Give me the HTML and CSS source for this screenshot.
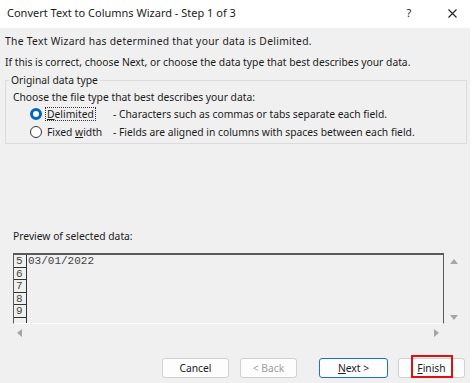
FILE: index.html
```html
<!DOCTYPE html>
<html>
<head>
<meta charset="utf-8">
<link rel="stylesheet" href="styles.css">
</head>
<body>
<div class="window">
  <div class="titlebar">
    <span class="title">Convert Text to Columns Wizard - Step 1 of 3</span>
    <span class="help">?</span>
    <svg class="close" width="9" height="9" viewBox="0 0 9 9"><path d="M0.5 0.5 L8.5 8.5 M8.5 0.5 L0.5 8.5" stroke="#222" stroke-width="1.1" fill="none"/></svg>
  </div>
  <div class="content">
    <p class="line l1">The Text Wizard has determined that your data is Delimited.</p>
    <p class="line l2">If this is correct, choose Next, or choose the data type that best describes your data.</p>
    <fieldset class="group">
      <legend>Original data type</legend>
      <div class="choose">Choose the file type that best describes your data:</div>
      <div class="opt">
        <span class="radio checked"></span>
        <span class="lblcol"><span class="lbl focus"><u>D</u>elimited</span></span>
        <span class="desc">- Characters such as commas or tabs separate each field.</span>
      </div>
      <div class="opt">
        <span class="radio"></span>
        <span class="lblcol"><span class="lbl">Fixed <u>w</u>idth</span></span>
        <span class="desc">- Fields are aligned in columns with spaces between each field.</span>
      </div>
    </fieldset>
    <div class="pv-label">Preview of selected data:</div>
    <div class="preview">
      <div class="pv-row">
        <div class="pv-box">
          <div class="nums">
            <div class="num">5</div>
            <div class="num">6</div>
            <div class="num">7</div>
            <div class="num">8</div>
            <div class="num">9</div>
          </div>
          <div class="data">03/01/2022</div>
        </div>
        <div class="vscroll">
          <span class="arrow up"></span>
          <span class="arrow down"></span>
        </div>
      </div>
      <div class="hscroll">
        <span class="arrow left"></span>
        <span class="arrow right"></span>
      </div>
    </div>
    <div class="buttons">
      <button class="btn cancel">Cancel</button>
      <button class="btn back" disabled>&lt; Back</button>
      <button class="btn next default"><u>N</u>ext &gt;</button>
      <button class="btn finish"><u>F</u>inish</button>
      <span class="highlight"></span>
    </div>
  </div>
</div>
</body>
</html>
```

FILE: styles.css
```css
* { box-sizing: border-box; }
html, body { margin: 0; padding: 0; background: #ffffff; }
body {
  width: 474px;
  height: 383px;
  overflow: hidden;
  font-family: "Noto Sans", "Open Sans", sans-serif;
  font-size: 10.3px;
  color: #1b1b1b;
}
.window {
  width: 470px;
  height: 383px;
  display: flex;
  flex-direction: column;
}
.titlebar {
  height: 28px;
  background: #ffffff;
  display: flex;
  align-items: center;
  padding-left: 7px;
  flex: none;
}
.title { flex: 1; font-size: 11px; line-height: 16px; padding-bottom: 2px; }
.help { width: 10px; text-align: center; margin-right: 34px; font-size: 11px; line-height: 16px; padding-bottom: 2px; }
.close { margin-right: 13px; margin-bottom: 2px; }
.content {
  flex: 1;
  background: #f0f0f0;
  display: flex;
  flex-direction: column;
}
.line { margin: 0; padding-left: 5px; line-height: 18px; white-space: nowrap; }
.l1 { margin-top: 4px; letter-spacing: 0.3px; }
.l2 { margin-top: 3px; }
.group {
  margin: 1px 3px 0 5px;
  padding: 0 0 2px 7px;
  border: 1px solid #dcdcdc;
  min-width: 0;
}
.group legend {
  padding: 0 2px;
  margin-left: -4px;
  line-height: 16px;
}
.choose { margin-top: 1px; line-height: 16px; }
.opt {
  display: flex;
  align-items: center;
  height: 18px;
  padding-left: 17px;
  white-space: nowrap;
}
.radio {
  width: 12px;
  height: 12px;
  border-radius: 50%;
  border: 1px solid #333;
  background: #fff;
  flex: none;
}
.radio.checked {
  border: 3.5px solid #0067c0;
  background: #fff;
}
.lblcol { width: 71px; flex: none; padding-left: 3px; }
.lbl { display: inline-block; padding: 0 1px; line-height: 12px; border: 1px dotted transparent; }
.lbl.focus { border-color: #333; }
.desc { flex: none; }
.pv-label { margin-top: 84px; padding-left: 13px; line-height: 16px; }
.preview { margin-top: 9px; margin-left: 13px; width: 450px; }
.pv-row { display: flex; height: 71px; }
.pv-box {
  width: 431px;
  height: 71px;
  border-top: 2px solid #5a5a5a;
  border-left: 1px solid #5a5a5a;
  border-right: 1px solid #5a5a5a;
  border-bottom: 1px solid #ffffff;
  display: flex;
  background: #f0f0f0;
}
.nums {
  width: 13px;
  border-right: 1px solid #333;
  flex: none;
  font-family: "Liberation Mono", monospace;
  font-size: 11px;
  color: #444;
}
.num {
  height: 12.5px;
  line-height: 12px;
  border-bottom: 1px solid #333;
  padding-left: 2px;
}
.data {
  font-family: "Liberation Mono", monospace;
  font-size: 11px;
  color: #444;
  line-height: 13px;
  padding-left: 1px;
}
.vscroll {
  flex: 1;
  display: flex;
  flex-direction: column;
  justify-content: space-between;
  align-items: center;
  padding: 6px 0 4px 0;
}
.hscroll {
  height: 17px;
  display: flex;
  justify-content: space-between;
  align-items: center;
  padding: 0 5px 0 4px;
  width: 431px;
}
.arrow { width: 0; height: 0; display: block; }
.arrow.up { border-left: 4px solid transparent; border-right: 4px solid transparent; border-bottom: 5px solid #a6a6a6; }
.arrow.down { border-left: 4px solid transparent; border-right: 4px solid transparent; border-top: 5px solid #a6a6a6; }
.arrow.left { border-top: 4px solid transparent; border-bottom: 4px solid transparent; border-right: 5px solid #a6a6a6; }
.arrow.right { border-top: 4px solid transparent; border-bottom: 4px solid transparent; border-left: 5px solid #a6a6a6; }
.buttons {
  margin-top: 17px;
  display: flex;
  padding-left: 162px;
  position: relative;
}
.btn {
  height: 20px;
  width: 67px;
  background: #fdfdfd;
  border: 1px solid #d0d0d0;
  border-radius: 3px;
  font-family: "Noto Sans", "Open Sans", sans-serif;
  font-size: 10.3px;
  color: #1b1b1b;
  padding: 0;
  line-height: 16px;
}
.back { width: 57px; margin-left: 11px; color: #a0a0a0; }
.next { width: 69px; margin-left: 22px; border-color: #1a73c8; }
.finish { margin-left: 10px; }
.highlight {
  position: absolute;
  left: 411px;
  top: -3px;
  width: 42px;
  height: 23px;
  border: 2px solid #e01010;
}
```
